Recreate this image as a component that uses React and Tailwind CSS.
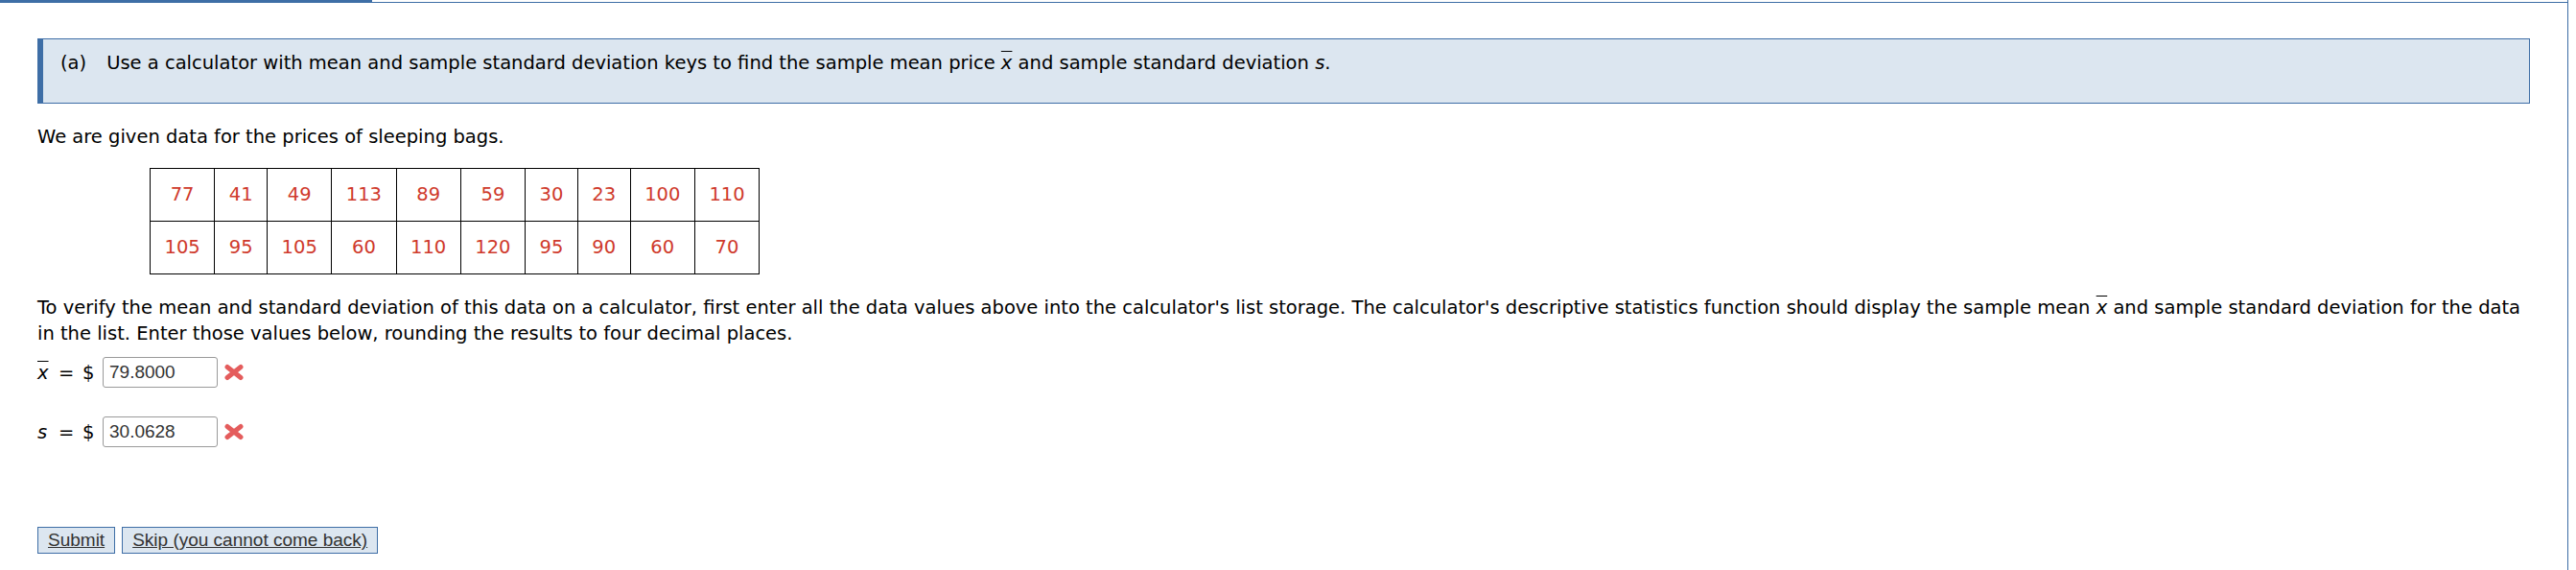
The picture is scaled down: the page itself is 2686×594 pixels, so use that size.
const top = [77, 41, 49, 113, 89, 59, 30, 23, 100, 110];
const bottom = [105, 95, 105, 60, 110, 120, 95, 90, 60, 70];

function XBar() {
  return <span className="italic overline">x</span>;
}

function WrongMark() {
  return (
    <svg width="22" height="18" viewBox="0 0 22 18" className="ml-[6px]">
      <path
        d="M4 3.5 L18 14.5 M18 3.5 L4 14.5"
        stroke="#e45c5c"
        strokeWidth="5"
        strokeLinecap="round"
      />
    </svg>
  );
}

function AnswerRow({ label, value, className }) {
  return (
    <div className={`flex h-[32px] items-center ${className}`}>
      <span className="w-[22px]">{label}</span>
      <span className="w-[25px]">=</span>
      <span className="w-[21px]">$</span>
      <input
        readOnly
        defaultValue={value}
        className="h-[32px] w-[120px] rounded-[3px] border border-[#9a9a9a] pl-[6px] font-['Liberation_Sans',Arial,sans-serif] text-[19px] text-[#333]"
      />
      <WrongMark />
    </div>
  );
}

export default function App() {
  return (
    <div className="min-h-[594px] w-[2678px] bg-white font-['DejaVu_Sans',Verdana,sans-serif] text-[19.5px] leading-[27px] text-black">
      <div className="flex h-[3px]">
        <div className="w-[388px] bg-[#3e6ea6]" />
        <div className="flex-1 border-r border-b border-[#3e6ea6]" />
      </div>
      <div className="min-h-[591px] border-r border-[#3e6ea6] px-[39px] pt-[37px]">
        <div className="flex h-[68px] border border-l-[6px] border-[#3e6ea6] bg-[#dce6f0] pt-[11px] pl-[18px]">
          <span>(a)</span>
          <span className="ml-[21px]">
            Use a calculator with mean and sample standard deviation keys to
            find the sample mean price <XBar /> and sample standard deviation{' '}
            <span className="italic">s</span>.
          </span>
        </div>

        <p className="mt-[21px]">We are given data for the prices of sleeping bags.</p>

        <table className="mt-[19px] ml-[117px] border-collapse text-[#cf3a2c]">
          <tbody>
            {[top, bottom].map((row, i) => (
              <tr key={i}>
                {row.map((v, j) => (
                  <td
                    key={j}
                    className="border border-black px-[14.5px] py-[16px] text-center leading-[22px]"
                  >
                    {v}
                  </td>
                ))}
              </tr>
            ))}
          </tbody>
        </table>

        <p className="mt-[21px]">
          To verify the mean and standard deviation of this data on a
          calculator, first enter all the data values above into the
          calculator's list storage. The calculator's descriptive statistics
          function should display the sample mean <XBar /> and sample standard
          deviation for the data in the list. Enter those values below, rounding
          the results to four decimal places.
        </p>

        <AnswerRow label={<XBar />} value="79.8000" className="mt-[11px]" />
        <AnswerRow
          label={<span className="italic">s</span>}
          value="30.0628"
          className="mt-[30px]"
        />

        <div className="mt-[83px] flex gap-[7px] font-['Liberation_Sans',Arial,sans-serif] text-[19px] leading-[22px] text-[#333]">
          <button className="h-[28px] border border-[#3e6ea6] bg-[#dce6f0] px-[10px] underline">
            Submit
          </button>
          <button className="h-[28px] border border-[#3e6ea6] bg-[#dce6f0] px-[10px] underline">
            Skip (you cannot come back)
          </button>
        </div>
      </div>
    </div>
  );
}
